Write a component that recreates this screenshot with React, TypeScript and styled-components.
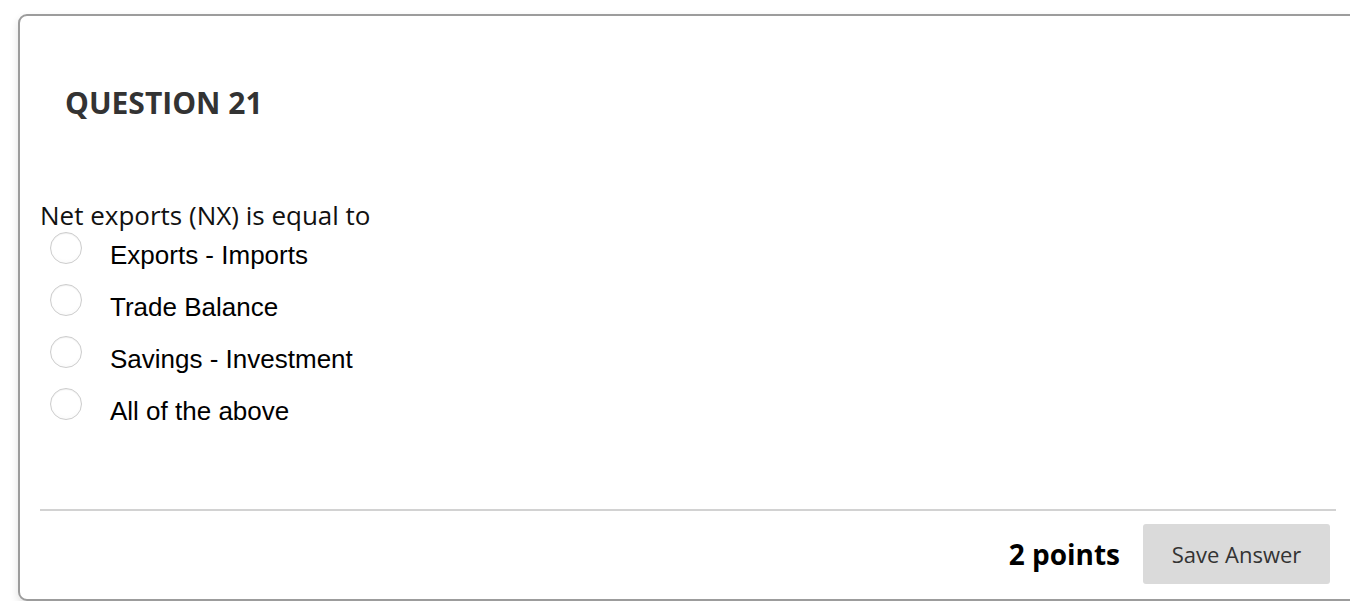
import React from "react";
import styled, { createGlobalStyle } from "styled-components";

const options = [
  "Exports - Imports",
  "Trade Balance",
  "Savings - Investment",
  "All of the above",
];

const App = () => {
  return (
    <>
      <GlobalStyle />
      <Card>
        <Heading>QUESTION 21</Heading>
        <Prompt>Net exports (NX) is equal to</Prompt>
        <OptionList>
          {options.map((label) => (
            <OptionRow key={label}>
              <Radio type="radio" name="q21" />
              <OptionLabel>{label}</OptionLabel>
            </OptionRow>
          ))}
        </OptionList>
        <Divider />
        <Footer>
          <Points>2 points</Points>
          <SaveBtn>Save Answer</SaveBtn>
        </Footer>
      </Card>
    </>
  );
};

const GlobalStyle = createGlobalStyle`
  html, body {
    margin: 0;
    padding: 0;
    background: #fff;
    overflow: hidden;
  }
`;

const Card = styled.div`
  box-sizing: border-box;
  width: 1340px;
  margin: 14px 0 0 18px;
  padding: 0 20px 15px 20px;
  border: 2px solid #9c9c9c;
  border-radius: 9px;
  background: #fff;
  box-shadow: 0 4px 8px rgba(0, 0, 0, 0.12);
`;

const Heading = styled.h2`
  margin: 66px 0 0 25px;
  font-family: "Open Sans", sans-serif;
  font-weight: 700;
  font-size: 30px;
  line-height: 41px;
  color: #333;
`;

const Prompt = styled.div`
  margin-top: 76px;
  font-family: "Open Sans", sans-serif;
  font-size: 26px;
  line-height: 32px;
  color: #111;
`;

const OptionList = styled.div`
  display: flex;
  flex-direction: column;
  margin-top: 1px;
`;

const OptionRow = styled.label`
  display: flex;
  align-items: flex-start;
  height: 52px;
`;

const Radio = styled.input`
  appearance: none;
  box-sizing: border-box;
  width: 32px;
  height: 32px;
  margin: 0 28px 0 10px;
  border-radius: 50%;
  border: 1px solid #cdcdcd;
  background: radial-gradient(circle at 50% 40%, #fff 60%, #f4f4f4 100%);
  box-shadow: inset 0 1px 1px rgba(0, 0, 0, 0.06);
`;

const OptionLabel = styled.span`
  padding-top: 7px;
  font-family: "Liberation Sans", Arial, sans-serif;
  font-size: 26px;
  line-height: 32px;
  color: #000;
`;

const Divider = styled.hr`
  margin: 69px 0 0 0;
  height: 2px;
  border: none;
  background: #d2d2d2;
`;

const Footer = styled.div`
  display: flex;
  justify-content: flex-end;
  align-items: center;
  gap: 23px;
  padding: 13px 6px 0 0;
`;

const Points = styled.span`
  font-family: "Open Sans", sans-serif;
  font-weight: 700;
  font-size: 28px;
  color: #000;
`;

const SaveBtn = styled.button`
  width: 187px;
  height: 60px;
  border: none;
  border-radius: 3px;
  background: #dadada;
  font-family: "Open Sans", sans-serif;
  font-size: 22px;
  color: #333;
`;

export default App;
